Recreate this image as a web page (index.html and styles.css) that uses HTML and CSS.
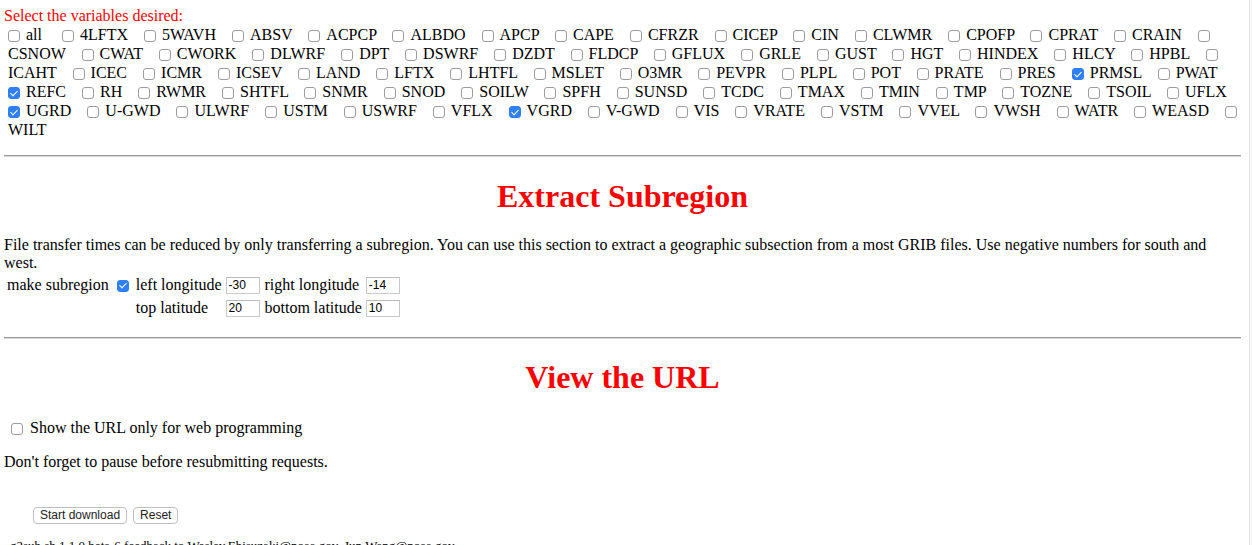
FILE: index.html
```html
<!DOCTYPE html>
<html lang="en">
<head>
<meta charset="utf-8">
<title>g2sub grib filter</title>
<link rel="stylesheet" href="styles.css">
</head>
<body>
<form class="page">
<div class="vars"><span class="prompt">Select the variables desired:</span><br>
<input type="checkbox" class="cb"><wbr>&nbsp;all &nbsp;&nbsp;
<input type="checkbox" class="cb"><wbr>&nbsp;4LFTX &nbsp;
<input type="checkbox" class="cb"><wbr>&nbsp;5WAVH &nbsp;
<input type="checkbox" class="cb"><wbr>&nbsp;ABSV &nbsp;
<input type="checkbox" class="cb"><wbr>&nbsp;ACPCP &nbsp;
<input type="checkbox" class="cb"><wbr>&nbsp;ALBDO &nbsp;
<input type="checkbox" class="cb"><wbr>&nbsp;APCP &nbsp;
<input type="checkbox" class="cb"><wbr>&nbsp;CAPE &nbsp;
<input type="checkbox" class="cb"><wbr>&nbsp;CFRZR &nbsp;
<input type="checkbox" class="cb"><wbr>&nbsp;CICEP &nbsp;
<input type="checkbox" class="cb"><wbr>&nbsp;CIN &nbsp;
<input type="checkbox" class="cb"><wbr>&nbsp;CLWMR &nbsp;
<input type="checkbox" class="cb"><wbr>&nbsp;CPOFP &nbsp;
<input type="checkbox" class="cb"><wbr>&nbsp;CPRAT &nbsp;
<input type="checkbox" class="cb"><wbr>&nbsp;CRAIN &nbsp;
<input type="checkbox" class="cb"><wbr>&nbsp;CSNOW &nbsp;
<input type="checkbox" class="cb"><wbr>&nbsp;CWAT &nbsp;
<input type="checkbox" class="cb"><wbr>&nbsp;CWORK &nbsp;
<input type="checkbox" class="cb"><wbr>&nbsp;DLWRF &nbsp;
<input type="checkbox" class="cb"><wbr>&nbsp;DPT &nbsp;
<input type="checkbox" class="cb"><wbr>&nbsp;DSWRF &nbsp;
<input type="checkbox" class="cb"><wbr>&nbsp;DZDT &nbsp;
<input type="checkbox" class="cb"><wbr>&nbsp;FLDCP &nbsp;
<input type="checkbox" class="cb"><wbr>&nbsp;GFLUX &nbsp;
<input type="checkbox" class="cb"><wbr>&nbsp;GRLE &nbsp;
<input type="checkbox" class="cb"><wbr>&nbsp;GUST &nbsp;
<input type="checkbox" class="cb"><wbr>&nbsp;HGT &nbsp;
<input type="checkbox" class="cb"><wbr>&nbsp;HINDEX &nbsp;
<input type="checkbox" class="cb"><wbr>&nbsp;HLCY &nbsp;
<input type="checkbox" class="cb"><wbr>&nbsp;HPBL &nbsp;
<input type="checkbox" class="cb"><wbr>&nbsp;ICAHT &nbsp;
<input type="checkbox" class="cb"><wbr>&nbsp;ICEC &nbsp;
<input type="checkbox" class="cb"><wbr>&nbsp;ICMR &nbsp;
<input type="checkbox" class="cb"><wbr>&nbsp;ICSEV &nbsp;
<input type="checkbox" class="cb"><wbr>&nbsp;LAND &nbsp;
<input type="checkbox" class="cb"><wbr>&nbsp;LFTX &nbsp;
<input type="checkbox" class="cb"><wbr>&nbsp;LHTFL &nbsp;
<input type="checkbox" class="cb"><wbr>&nbsp;MSLET &nbsp;
<input type="checkbox" class="cb"><wbr>&nbsp;O3MR &nbsp;
<input type="checkbox" class="cb"><wbr>&nbsp;PEVPR &nbsp;
<input type="checkbox" class="cb"><wbr>&nbsp;PLPL &nbsp;
<input type="checkbox" class="cb"><wbr>&nbsp;POT &nbsp;
<input type="checkbox" class="cb"><wbr>&nbsp;PRATE &nbsp;
<input type="checkbox" class="cb"><wbr>&nbsp;PRES &nbsp;
<input type="checkbox" class="cb" checked><wbr>&nbsp;PRMSL &nbsp;
<input type="checkbox" class="cb"><wbr>&nbsp;PWAT &nbsp;
<input type="checkbox" class="cb" checked><wbr>&nbsp;REFC &nbsp;
<input type="checkbox" class="cb"><wbr>&nbsp;RH &nbsp;
<input type="checkbox" class="cb"><wbr>&nbsp;RWMR &nbsp;
<input type="checkbox" class="cb"><wbr>&nbsp;SHTFL &nbsp;
<input type="checkbox" class="cb"><wbr>&nbsp;SNMR &nbsp;
<input type="checkbox" class="cb"><wbr>&nbsp;SNOD &nbsp;
<input type="checkbox" class="cb"><wbr>&nbsp;SOILW &nbsp;
<input type="checkbox" class="cb"><wbr>&nbsp;SPFH &nbsp;
<input type="checkbox" class="cb"><wbr>&nbsp;SUNSD &nbsp;
<input type="checkbox" class="cb"><wbr>&nbsp;TCDC &nbsp;
<input type="checkbox" class="cb"><wbr>&nbsp;TMAX &nbsp;
<input type="checkbox" class="cb"><wbr>&nbsp;TMIN &nbsp;
<input type="checkbox" class="cb"><wbr>&nbsp;TMP &nbsp;
<input type="checkbox" class="cb"><wbr>&nbsp;TOZNE &nbsp;
<input type="checkbox" class="cb"><wbr>&nbsp;TSOIL &nbsp;
<input type="checkbox" class="cb"><wbr>&nbsp;UFLX &nbsp;
<input type="checkbox" class="cb" checked><wbr>&nbsp;UGRD &nbsp;
<input type="checkbox" class="cb"><wbr>&nbsp;U-GWD &nbsp;
<input type="checkbox" class="cb"><wbr>&nbsp;ULWRF &nbsp;
<input type="checkbox" class="cb"><wbr>&nbsp;USTM &nbsp;
<input type="checkbox" class="cb"><wbr>&nbsp;USWRF &nbsp;
<input type="checkbox" class="cb"><wbr>&nbsp;VFLX &nbsp;
<input type="checkbox" class="cb" checked><wbr>&nbsp;VGRD &nbsp;
<input type="checkbox" class="cb"><wbr>&nbsp;V-GWD &nbsp;
<input type="checkbox" class="cb"><wbr>&nbsp;VIS &nbsp;
<input type="checkbox" class="cb"><wbr>&nbsp;VRATE &nbsp;
<input type="checkbox" class="cb"><wbr>&nbsp;VSTM &nbsp;
<input type="checkbox" class="cb"><wbr>&nbsp;VVEL &nbsp;
<input type="checkbox" class="cb"><wbr>&nbsp;VWSH &nbsp;
<input type="checkbox" class="cb"><wbr>&nbsp;WATR &nbsp;
<input type="checkbox" class="cb"><wbr>&nbsp;WEASD &nbsp;
<input type="checkbox" class="cb"><wbr>&nbsp;WILT</div>

<hr class="rule rule-first">
<h1 class="title">Extract Subregion</h1>
<p class="desc">File transfer times can be reduced by only transferring a subregion. You can use this section to extract a geographic subsection from a most GRIB files. Use negative numbers for south and west.</p>
<table class="sub">
<tr>
<td>make subregion</td>
<td><input type="checkbox" class="cb cb-cell" checked></td>
<td>left longitude</td>
<td><input type="text" class="num" value="-30"></td>
<td class="lbl-right">right longitude</td>
<td><input type="text" class="num" value="-14"></td>
</tr>
<tr>
<td></td>
<td></td>
<td>top latitude</td>
<td><input type="text" class="num" value="20"></td>
<td class="lbl-right">bottom latitude</td>
<td><input type="text" class="num" value="10"></td>
</tr>
</table>

<hr class="rule rule-second">
<h1 class="title title-url">View the URL</h1>
<table class="url">
<tr><td><input type="checkbox" class="cb cb-cell"> Show the URL only for web programming</td></tr>
</table>
<p class="note">Don't forget to pause before resubmitting requests.</p>
<div class="actions">
<button type="button" class="btn">Start download</button>
<button type="button" class="btn">Reset</button>
</div>
<p class="foot">g2sub.sh 1.1.0 beta-6 feedback to Wesley.Ebisuzaki@noaa.gov, Jun.Wang@noaa.gov</p>
</form>
<div class="sbar"></div>
</body>
</html>
```

FILE: styles.css
```css
html {
  overflow: hidden;
  background: #fff;
}

body {
  margin: 6px 11px 0 4px;
  font-family: "Liberation Serif", "Times New Roman", serif;
  font-size: 16px;
  color: #000;
}

.page {
  margin: 0;
}

.vars {
  line-height: 19px;
}

.prompt {
  color: #ff0000;
}

.cb {
  -webkit-appearance: none;
  appearance: none;
  box-sizing: border-box;
  width: 12px;
  height: 12px;
  margin: 3px 2px 0 4px;
  border: 1px solid #9c9c9c;
  border-radius: 3px;
  background: #fff;
  vertical-align: -2px;
  position: relative;
}

.cb:checked {
  background: #2f7ff6;
  border-color: #2f7ff6;
}

.cb:checked::after {
  content: "";
  position: absolute;
  left: 3px;
  top: 0.5px;
  width: 3px;
  height: 6px;
  border: solid #fff;
  border-width: 0 1.6px 1.6px 0;
  transform: rotate(45deg);
}

.rule {
  height: 0;
  border: 0;
  border-top: 1px solid #9a9a9a;
  border-bottom: 1px solid #d8d8d8;
  margin: 8px 0;
}

.rule-first {
  margin-top: 16px;
}

.rule-second {
  margin-top: 17px;
}

.title {
  color: #ff0000;
  text-align: center;
  font-size: 32px;
  font-weight: bold;
  margin: 21px 0;
}

.title-url {
  margin: 20px 0;
}

.desc {
  margin: 0;
}

.sub {
  border-spacing: 2px;
  margin-top: 0;
}

.sub td {
  padding: 1px;
  height: 19px;
}

.sub .lbl-right {
  padding-left: 2px;
}

.cb-cell {
  margin-left: 4px;
  margin-right: 3px;
}

.num {
  box-sizing: border-box;
  width: 34px;
  height: 17px;
  margin: 0;
  padding: 0 2px;
  border: 1px solid #c9c9c9;
  border-top-color: #b9b9b9;
  font-family: "Liberation Sans", Arial, sans-serif;
  font-size: 12px;
  color: #000;
  background: #fff;
}

.url {
  border-spacing: 2px;
}

.url td {
  padding: 1px;
}

.note {
  margin: 13px 0 0;
}

.actions {
  display: flex;
  gap: 6px;
  padding-left: 29px;
  margin-top: 36px;
}

.btn {
  box-sizing: border-box;
  height: 17px;
  margin: 0;
  padding: 0 6px;
  border: 1px solid #c0c0c0;
  border-radius: 4px;
  background: #fff;
  color: #222;
  font-family: "Liberation Sans", Arial, sans-serif;
  font-size: 12px;
  line-height: 15px;
}

.foot {
  font-size: 13px;
  margin: 14px 0 0 6px;
}

.sbar {
  position: fixed;
  top: 0;
  right: 0;
  bottom: 0;
  width: 2px;
  background: #f7f7f7;
  border-left: 1px solid #e4e4e4;
}
```
